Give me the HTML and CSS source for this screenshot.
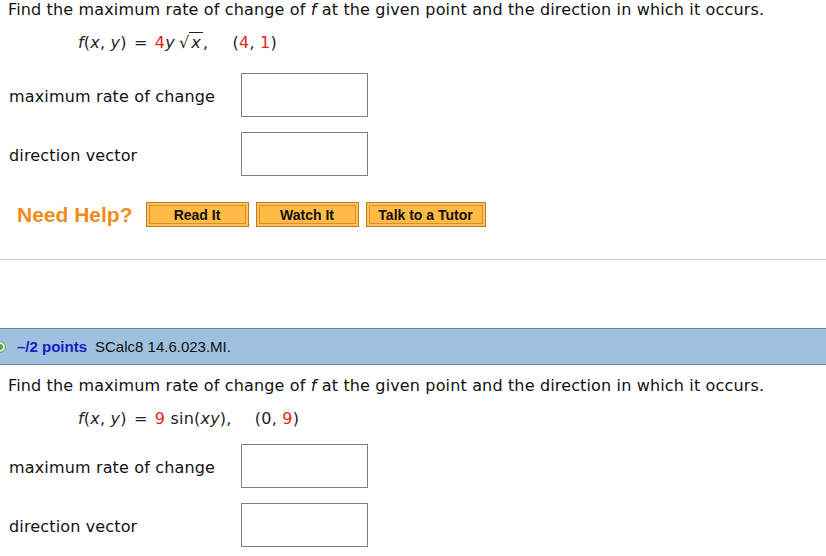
FILE: index.html
```html
<!DOCTYPE html>
<html lang="en">
<head>
    <meta charset="UTF-8">
    <meta name="viewport" content="width=device-width, initial-scale=1.0">
    <title>Directional Derivatives</title>
    <link rel="stylesheet" href="styles.css">
</head>
<body>
    <div class="question">
        <p class="prompt">Find the maximum rate of change of <i>f</i> at the given point and the direction in which it occurs.</p>
        <div class="formula">
            <i>f</i>(<i>x</i>, <i>y</i>) <span class="eq">=</span> <span class="red">4</span><i>y</i><span class="root">&radic;<span class="radicand"><i>x</i></span></span>,
            <span class="point">(<span class="red">4</span>, <span class="red">1</span>)</span>
        </div>
        <div class="answers">
            <label>maximum rate of change</label>
            <div class="answer-box"></div>
            <label>direction vector</label>
            <div class="answer-box"></div>
        </div>
        <div class="help">
            <span class="need-help">Need Help?</span>
            <button class="help-button read">Read It</button>
            <button class="help-button watch">Watch It</button>
            <button class="help-button tutor">Talk to a Tutor</button>
        </div>
    </div>

    <div class="divider"></div>

    <div class="question-bar">
        <span class="status-dot"></span>
        <span class="points">&ndash;/2 points</span>
        <span class="source">SCalc8 14.6.023.MI.</span>
    </div>

    <div class="question second">
        <p class="prompt">Find the maximum rate of change of <i>f</i> at the given point and the direction in which it occurs.</p>
        <div class="formula">
            <i>f</i>(<i>x</i>, <i>y</i>) <span class="eq">=</span> <span class="red">9</span> sin(<i>xy</i>),
            <span class="point">(0, <span class="red">9</span>)</span>
        </div>
        <div class="answers">
            <label>maximum rate of change</label>
            <div class="answer-box"></div>
            <label>direction vector</label>
            <div class="answer-box"></div>
        </div>
    </div>
</body>
</html>
```

FILE: styles.css
```css
body {
    margin: 0;
    font-family: "DejaVu Sans", Verdana, sans-serif;
    font-size: 16px;
    color: #111;
    background: #fff;
    overflow: hidden;
}
.question {
    padding-left: 8px;
}
.prompt {
    margin: 0;
    line-height: 19px;
    letter-spacing: 0.15px;
}
.formula {
    padding-left: 70px;
    margin-top: 14px;
    line-height: 19px;
    color: #222;
    letter-spacing: 0.2px;
}
.eq {
    margin: 0 2px;
}
.red {
    color: #e8221c;
}
.root {
    margin-left: 4px;
}
.radicand {
    border-top: 1px solid #222;
    padding: 0 2px;
}
.point {
    margin-left: 19px;
}
.answers {
    display: grid;
    grid-template-columns: 233px 127px;
    row-gap: 15px;
    align-items: center;
    margin-top: 21px;
}
.answers label {
    padding-left: 1px;
    padding-top: 3px;
    letter-spacing: 0.15px;
}
.answer-box {
    height: 42px;
    border: 1px solid #808080;
    background: #fff;
}
.help {
    display: flex;
    align-items: center;
    margin-top: 26px;
    padding-left: 9px;
}
.need-help {
    font-family: "Liberation Sans", Arial, sans-serif;
    font-weight: bold;
    font-size: 21px;
    color: #f08b1d;
    margin-right: 13px;
}
.help-button {
    font-family: "Liberation Sans", Arial, sans-serif;
    font-weight: bold;
    font-size: 14px;
    color: #111;
    height: 25px;
    background: #ffbb44;
    border: 1px solid #c8761e;
    box-shadow: inset 0 0 0 2px #ffc45a, inset 0 0 0 3px #d8902e;
    margin-right: 7px;
    padding: 0;
}
.read {
    width: 103px;
}
.watch {
    width: 103px;
}
.tutor {
    width: 120px;
}
.divider {
    margin-top: 32px;
    border-top: 1px solid #cccccc;
}
.question-bar {
    margin-top: 68px;
    height: 35px;
    display: flex;
    align-items: center;
    background: #9dc1de;
    border-top: 1px solid #6d8796;
    border-bottom: 1px solid #6d8796;
    font-family: "Liberation Sans", Arial, sans-serif;
    font-size: 15px;
}
.status-dot {
    width: 10px;
    height: 10px;
    margin-left: -6px;
    border-radius: 50%;
    background: #4caf3a;
    border: 1px solid #8a9aa0;
    box-shadow: inset 0 0 0 2px #e8eef0;
}
.points {
    font-weight: bold;
    color: #1b1bc4;
    margin-left: 11px;
}
.source {
    color: #111;
    margin-left: 8px;
}
.second .prompt {
    margin-top: 11px;
}
.second .formula {
    margin-top: 14px;
}
.second .point {
    margin-left: 18px;
}
.second .answers {
    margin-top: 16px;
}
```
